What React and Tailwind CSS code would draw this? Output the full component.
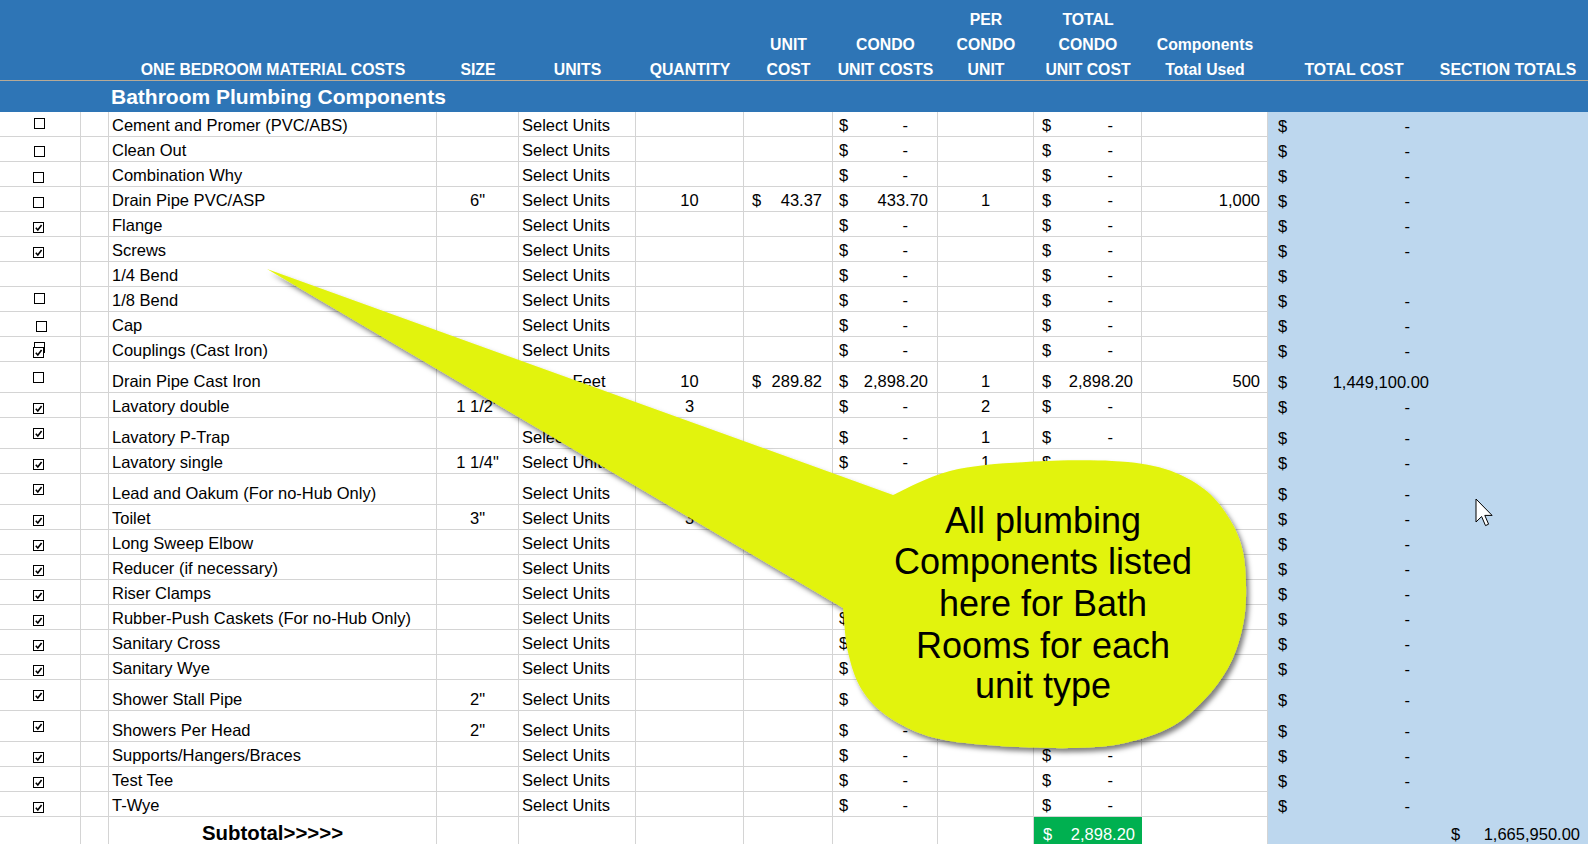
import React from 'react'

const GRID =
  'grid grid-cols-[81px_28px_328px_82px_117px_108px_89px_105px_96px_108px_126px_172px_148px]'

const LINE = 'border-r border-b border-[#d4d4d4]'

const heads = [
  [],
  [],
  ['ONE BEDROOM MATERIAL COSTS'],
  ['SIZE'],
  ['UNITS'],
  ['QUANTITY'],
  ['UNIT', 'COST'],
  ['CONDO', 'UNIT COSTS'],
  ['PER', 'CONDO', 'UNIT'],
  ['TOTAL', 'CONDO', 'UNIT COST'],
  ['Components', 'Total Used'],
  ['TOTAL COST'],
  ['SECTION TOTALS'],
]

// hideH: 'all' | 'dash' -> cells that sit under the callout
const rows = [
  { name: 'Cement and Promer (PVC/ABS)', cb: 'off', cbc: 'mt-[6px] ml-[34px]' },
  { name: 'Clean Out', cb: 'off', cbc: 'mt-[9px] ml-[34px]' },
  { name: 'Combination Why', cb: 'off' },
  {
    name: 'Drain Pipe PVC/ASP',
    cb: 'off',
    size: '6"',
    qty: '10',
    ucost: '43.37',
    condo: '433.70',
    per: '1',
    comp: '1,000',
  },
  { name: 'Flange', cb: 'on' },
  { name: 'Screws', cb: 'on' },
  { name: '1/4 Bend', cb: null, noCost: true },
  { name: '1/8 Bend', cb: 'off', cbc: 'mt-[6px] ml-[34px]' },
  { name: 'Cap', cb: 'off', cbc: 'mt-[9px] ml-[36px]' },
  { name: 'Couplings (Cast Iron)', cb: 'double', cbc: 'mt-[5px] ml-[33px]' },
  {
    name: 'Drain Pipe Cast Iron',
    tall: true,
    cb: 'off',
    units: 'Linear Feet',
    qty: '10',
    ucost: '289.82',
    condo: '2,898.20',
    per: '1',
    tcondo: '2,898.20',
    comp: '500',
    cost: '1,449,100.00',
  },
  { name: 'Lavatory double', cb: 'on', size: '1 1/2"', qty: '3', per: '2', noUnits: true },
  { name: 'Lavatory P-Trap', tall: true, cb: 'on', per: '1' },
  { name: 'Lavatory single', cb: 'on', size: '1 1/4"', per: '1' },
  { name: 'Lead and Oakum (For no-Hub Only)', tall: true, cb: 'on', hideH: 'all', hideJ: true },
  { name: 'Toilet', cb: 'on', size: '3"', qty: '3', hideH: 'all', hideJ: true },
  { name: 'Long Sweep Elbow', cb: 'on', hideH: 'all', hideJ: true },
  { name: 'Reducer (if necessary)', cb: 'on', hideH: 'all', hideJ: true },
  { name: 'Riser Clamps', cb: 'on', hideH: 'all', hideJ: true },
  { name: 'Rubber-Push Caskets (For no-Hub Only)', cb: 'on', hideH: 'dash', hideJ: true },
  { name: 'Sanitary Cross', cb: 'on', hideH: 'dash', hideJ: true },
  { name: 'Sanitary Wye', cb: 'on', hideH: 'dash', hideJ: true },
  { name: 'Shower Stall Pipe', tall: true, cb: 'on', size: '2"', hideH: 'dash', hideJ: true },
  { name: 'Showers Per Head', tall: true, cb: 'on', size: '2"', hideJ: true },
  { name: 'Supports/Hangers/Braces', cb: 'on' },
  { name: 'Test Tee', cb: 'on' },
  { name: 'T-Wye', cb: 'on' },
]

function Box({ kind }) {
  if (kind === 'double') {
    return (
      <svg width="13" height="17" viewBox="0 0 13 17">
        <rect x="1.5" y="0.5" width="10" height="10" fill="#fff" stroke="#000" />
        <rect x="0.5" y="5.5" width="10" height="10" fill="#fff" stroke="#000" />
        <path d="M2.8 10.8 L4.8 13 L8.6 8" fill="none" stroke="#000" strokeWidth="1.6" />
      </svg>
    )
  }
  return (
    <svg width="12" height="12" viewBox="0 0 12 12">
      <rect x="0.5" y="0.5" width="10" height="10" fill="#fff" stroke="#000" />
      {kind === 'on' && (
        <path d="M2.8 5.8 L4.8 8 L8.6 3" fill="none" stroke="#000" strokeWidth="1.6" />
      )}
    </svg>
  )
}

// accounting style cell: "$" on the left, value (or dash) on the right
function Acct({ v, pl, prNum, prDash, dollarOnly, empty, line = true }) {
  return (
    <div
      className={`flex items-end justify-between pb-[2px] leading-[18px] whitespace-nowrap ${pl} ${
        line ? LINE : ''
      }`}
    >
      {!empty && <span>$</span>}
      {!empty && !dollarOnly && <span className={v ? prNum : prDash}>{v || '-'}</span>}
    </div>
  )
}

function Row({ r }) {
  const cell = `${LINE} flex items-end pb-[2px] leading-[18px] whitespace-nowrap`
  return (
    <div className={`${GRID} ${r.tall ? 'h-[31px]' : 'h-[25px]'}`}>
      <div className={`${LINE} flex flex-col items-start`}>
        {r.cb && (
          <div className={r.cbc || 'mt-[10px] ml-[33px]'}>
            <Box kind={r.cb} />
          </div>
        )}
      </div>
      <div className={LINE}></div>
      <div className={`${cell} pl-[3px]`}>{r.name}</div>
      <div className={`${cell} justify-center`}>{r.size}</div>
      <div className={`${cell} pl-[3px]`}>{r.noUnits ? '' : r.units || 'Select Units'}</div>
      <div className={`${cell} justify-center`}>{r.qty}</div>
      {r.ucost ? (
        <Acct v={r.ucost} pl="pl-[8px]" prNum="pr-[10px]" />
      ) : (
        <div className={LINE}></div>
      )}
      <Acct
        v={r.condo}
        pl="pl-[6px]"
        prNum="pr-[9px]"
        prDash="pr-[29px]"
        empty={r.hideH === 'all'}
        dollarOnly={r.hideH === 'dash'}
      />
      <div className={`${cell} justify-center`}>{r.per}</div>
      <Acct v={r.tcondo} pl="pl-[8px]" prNum="pr-[8px]" prDash="pr-[28px]" empty={r.hideJ} />
      <div className={`${cell} justify-end pr-[7px]`}>{r.comp}</div>
      <div className="bg-[#bdd7ee] flex">
        <div className="flex-1">
          <Acct
            v={r.cost}
            pl="pl-[10px] h-full"
            prNum="pr-[11px]"
            prDash="pr-[30px]"
            dollarOnly={r.noCost}
            line={false}
          />
        </div>
      </div>
      <div className="bg-[#bdd7ee]"></div>
    </div>
  )
}

const blob = [
  [893, 495],
  [950, 471],
  [1026, 462],
  [1112, 461],
  [1165, 469],
  [1204, 489],
  [1229, 518],
  [1243, 552],
  [1246, 598],
  [1241, 634],
  [1228, 668],
  [1204, 700],
  [1171, 727],
  [1125, 743],
  [1075, 748],
  [1000, 746],
  [935, 738],
  [890, 718],
  [862, 690],
  [848, 652],
  [843, 608],
]

function smoothPath(pts) {
  let d = `M${pts[0][0]} ${pts[0][1]}`
  for (let i = 0; i < pts.length - 1; i++) {
    const p0 = pts[i - 1] || pts[i]
    const p1 = pts[i]
    const p2 = pts[i + 1]
    const p3 = pts[i + 2] || p2
    const c1x = p1[0] + (p2[0] - p0[0]) / 6
    const c1y = p1[1] + (p2[1] - p0[1]) / 6
    const c2x = p2[0] - (p3[0] - p1[0]) / 6
    const c2y = p2[1] - (p3[1] - p1[1]) / 6
    d += ` C${c1x} ${c1y} ${c2x} ${c2y} ${p2[0]} ${p2[1]}`
  }
  return d + ' L267 269 Z'
}

function Callout() {
  const lines = ['All plumbing', 'Components listed', 'here for Bath', 'Rooms for each', 'unit type']
  const base = [533, 574, 616, 658, 698]
  return (
    <svg
      className="absolute left-0 top-0 pointer-events-none"
      width="1588"
      height="844"
      viewBox="0 0 1588 844"
    >
      <defs>
        <filter id="callShadow" x="-10%" y="-10%" width="130%" height="130%">
          <feDropShadow dx="3" dy="4" stdDeviation="2.5" floodColor="#000" floodOpacity="0.5" />
        </filter>
      </defs>
      <path d={smoothPath(blob)} fill="#e2f30b" filter="url(#callShadow)" />
      {lines.map((t, i) => (
        <text
          key={t}
          x="1043"
          y={base[i]}
          textAnchor="middle"
          fontSize="36"
          fontFamily="'Liberation Sans', Arial, sans-serif"
          fill="#000"
        >
          {t}
        </text>
      ))}
    </svg>
  )
}

function Cursor() {
  return (
    <svg className="absolute left-[1475px] top-[498px]" width="19" height="29" viewBox="0 0 19 29">
      <path
        d="M1 1 L1 24 L6.6 18.5 L10.5 27.6 L13.6 26.2 L9.8 17.4 L17.1 17.4 Z"
        fill="#fff"
        stroke="#000"
        strokeWidth="1"
        strokeLinejoin="round"
      />
    </svg>
  )
}

export default function App() {
  return (
    <div className="relative w-[1588px] h-[844px] overflow-hidden bg-white text-black font-['Liberation_Sans',Arial,sans-serif] text-[16.5px]">
      {/* HEADER */}
      <div className={`${GRID} h-[81px] bg-[#2e75b6] border-b border-[#b7aa96]`}>
        {heads.map((h, i) => (
          <div
            key={i}
            className={`flex flex-col justify-end items-center text-center text-white font-bold text-[15.8px] leading-[25px] whitespace-nowrap ${
              i === 12 ? 'pr-[12px]' : ''
            }`}
          >
            <div className="-mb-[2px]">
              {h.map((l) => (
                <div key={l}>{l}</div>
              ))}
            </div>
          </div>
        ))}
      </div>

      {/* SECTION */}
      <div className="h-[31px] bg-[#2e75b6] pl-[111px] text-white font-bold text-[21px] leading-[31px]">
        Bathroom Plumbing Components
      </div>

      {/* ROWS */}
      {rows.map((r) => (
        <Row key={r.name} r={r} />
      ))}

      {/* SUBTOTAL */}
      <div className={`${GRID} h-[28px]`}>
        <div className="border-r border-[#d4d4d4]"></div>
        <div className="border-r border-[#d4d4d4]"></div>
        <div className="border-r border-[#d4d4d4] flex items-end justify-center font-bold text-[20.4px] leading-[24px]">
          Subtotal&gt;&gt;&gt;&gt;&gt;
        </div>
        <div className="border-r border-[#d4d4d4]"></div>
        <div className="border-r border-[#d4d4d4]"></div>
        <div className="border-r border-[#d4d4d4]"></div>
        <div className="border-r border-[#d4d4d4]"></div>
        <div className="border-r border-[#d4d4d4]"></div>
        <div className="border-r border-[#d4d4d4]"></div>
        <div className="bg-[#00b050] text-white flex items-end justify-between pl-[9px] pr-[7px] pb-[2px] leading-[18px]">
          <span>$</span>
          <span>2,898.20</span>
        </div>
        <div className="border-r border-[#d4d4d4]"></div>
        <div className="bg-[#bdd7ee]"></div>
        <div className="bg-[#bdd7ee] flex items-end justify-between pl-[11px] pr-[8px] pb-[2px] leading-[18px]">
          <span>$</span>
          <span>1,665,950.00</span>
        </div>
      </div>

      <Callout />
      <Cursor />
    </div>
  )
}
